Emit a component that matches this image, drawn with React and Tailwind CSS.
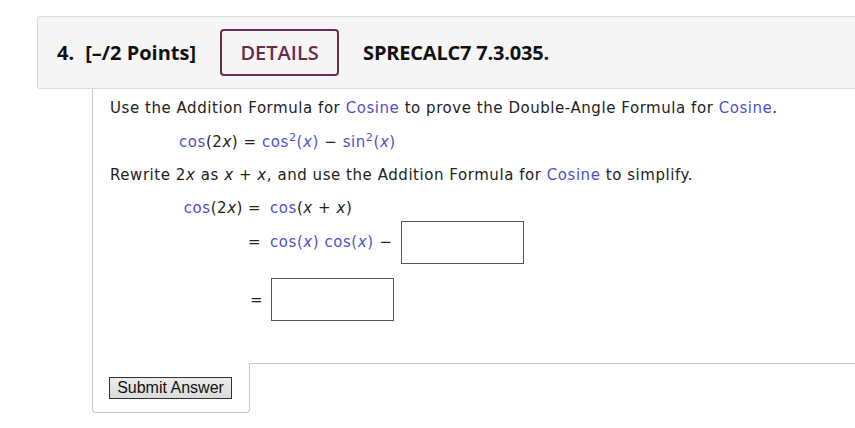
export default function App() {
  const blue = "text-[#5050d0]";
  const X = ({ c = "" }) => <span className={`italic ${c}`}>x</span>;
  return (
    <div className="w-[855px] h-[428px] overflow-hidden bg-white pt-[16px] pl-[37px] text-[#222]" style={{ fontFamily: '"DejaVu Sans", Verdana, sans-serif' }}>
      <div className="h-[73px] border border-r-0 border-[#dcdcdc] rounded-l-[3px] bg-[#f5f5f5] flex items-center pl-[19px]" style={{ fontFamily: '"Open Sans", sans-serif' }}>
        <span className="text-[20px] font-bold text-[#111]">4.</span>
        <span className="text-[20px] font-bold text-[#111] ml-[11px]">[–/2 Points]</span>
        <div className="ml-[24px] w-[119px] h-[47px] border-2 border-[#6b2b4b] rounded-[4px] flex items-center justify-center text-[20px] font-semibold text-[#6b2b4b]">DETAILS</div>
        <span className="ml-[24px] text-[20px] font-bold text-[#111] tracking-[-0.2px]">SPRECALC7 7.3.035.</span>
      </div>
      <div className="ml-[55px]">
        <div className="border-l border-[#c8c8c8] pl-[17px] pt-[7px] text-[15px] leading-[24px] tracking-[0.55px]">
          <div>Use the Addition Formula for <span className={blue}>Cosine</span> to prove the Double-Angle Formula for <span className={blue}>Cosine</span>.</div>
          <div className="mt-[10px] pl-[69px]">
            <span className={blue}>cos</span>(2<X />) = <span className={blue}>cos<sup>2</sup>(<X />)</span> − <span className={blue}>sin<sup>2</sup>(<X />)</span>
          </div>
          <div className="mt-[9px]">Rewrite 2<X /> as <X /> + <X />, and use the Addition Formula for <span className={blue}>Cosine</span> to simplify.</div>
          <div className="mt-[9px] flex items-center h-[24px]">
            <div className="w-[133px] text-right"><span className={blue}>cos</span>(2<X />)</div>
            <div className="w-[27px] pl-[5px]">=</div>
            <div><span className={blue}>cos</span>(<X /> + <X />)</div>
          </div>
          <div className="mt-[1px] flex items-center h-[42px]">
            <div className="w-[133px]"></div>
            <div className="w-[27px] pl-[5px]">=</div>
            <div className="flex items-center">
              <span className={blue}>cos(<X />) cos(<X />)</span>
              <span className="ml-[6px]">−</span>
              <div className="ml-[8px] w-[123px] h-[43px] border border-[#555] bg-white"></div>
            </div>
          </div>
          <div className="mt-[15px] flex items-center h-[43px]">
            <div className="w-[135px]"></div>
            <div className="w-[26px] pl-[5px]">=</div>
            <div className="w-[123px] h-[43px] border border-[#555] bg-white"></div>
          </div>
          <div className="h-[42px]"></div>
        </div>
        <div className="flex">
          <div className="w-[158px] h-[50px] border-l border-r border-b border-[#c8c8c8] rounded-b-[4px] pl-[16px] pt-[14px]">
            <button className="w-[123px] h-[22px] border border-[#333] bg-gradient-to-b from-[#ececec] to-[#dadada] text-[16px] leading-[18px] text-[#111] flex items-center justify-center" style={{ fontFamily: '"Liberation Sans", Arial, sans-serif' }}>Submit Answer</button>
          </div>
          <div className="flex-1 border-t border-[#c8c8c8] -ml-px"></div>
        </div>
      </div>
    </div>
  );
}
